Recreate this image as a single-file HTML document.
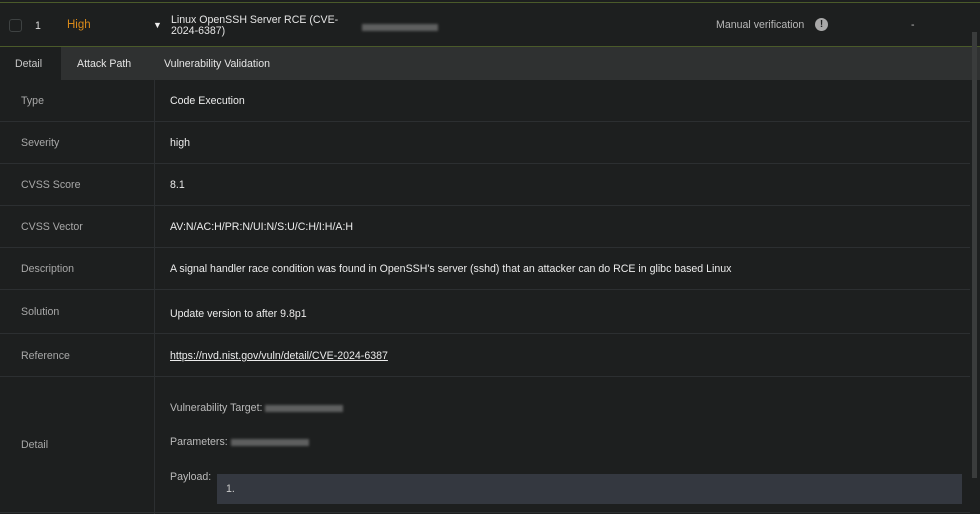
<!DOCTYPE html>
<html><head><meta charset="utf-8"><style>
*{margin:0;padding:0;box-sizing:border-box}
body{width:980px;height:514px;background:#1d1f1f;font-family:"Liberation Sans",sans-serif;font-size:10.6px;color:#e6e6e6;position:relative;overflow:hidden}
.a{position:absolute;white-space:nowrap}
.l{color:#a8a8a8;left:21px}
.v{left:170px;color:#ececec}
.hl{position:absolute;left:0;width:970px;height:1px;background:#2c2f31}
.blur{display:inline-block;height:7px;background:#8a8a8a;filter:blur(1.2px);opacity:.6;vertical-align:middle}
</style></head><body>
<div class="a" style="left:0;top:2px;width:980px;height:1px;background:#4a5a2a"></div>
<div class="a" style="left:9px;top:19px;width:13px;height:13px;border:1px solid #3e4242;border-radius:3px"></div>
<div class="a" style="left:35px;top:20px;color:#ddd">1</div>
<div class="a" style="left:67px;top:19px;color:#d98a1a;font-size:11.5px">High</div>
<div class="a" style="left:153px;top:20px;font-size:9px;color:#eee">▼</div>
<div class="a" style="left:171px;top:15px;line-height:11px;color:#e6e6e6">Linux OpenSSH Server RCE (CVE-<br>2024-6387)</div>
<div class="a" style="left:362px;top:21px"><span class="blur" style="width:76px"></span></div>
<div class="a" style="left:716px;top:19px;color:#b8b8b8">Manual verification</div>
<div class="a" style="left:815px;top:18px;width:13px;height:13px;border-radius:50%;background:#a8a8a8;color:#1d1f1f;font-size:10px;font-weight:bold;text-align:center;line-height:13px">!</div>
<div class="a" style="left:911px;top:19px;color:#bbb">-</div>
<div class="a" style="left:0;top:46px;width:980px;height:1px;background:#4a5a2a"></div>
<div class="a" style="left:0;top:47px;width:980px;height:33px;background:#2f3131"></div>
<div class="a" style="left:0;top:47px;width:61px;height:33px;background:#1d1f1f"></div>
<div class="a" style="left:15px;top:58px;color:#c8c8c8">Detail</div>
<div class="a" style="left:77px;top:58px;color:#e6e6e6">Attack Path</div>
<div class="a" style="left:164px;top:58px;color:#e6e6e6">Vulnerability Validation</div>
<div class="a" style="left:154px;top:80px;width:1px;height:434px;background:#2c2f31"></div>
<div class="hl" style="top:121px"></div><div class="hl" style="top:163px"></div><div class="hl" style="top:205px"></div><div class="hl" style="top:247px"></div><div class="hl" style="top:289px"></div><div class="hl" style="top:333px"></div><div class="hl" style="top:376px"></div><div class="hl" style="top:512px"></div>
<div class="a l" style="top:95px">Type</div><div class="a v" style="top:95px">Code Execution</div>
<div class="a l" style="top:137px">Severity</div><div class="a v" style="top:137px">high</div>
<div class="a l" style="top:179px">CVSS Score</div><div class="a v" style="top:179px">8.1</div>
<div class="a l" style="top:221px">CVSS Vector</div><div class="a v" style="top:221px">AV:N/AC:H/PR:N/UI:N/S:U/C:H/I:H/A:H</div>
<div class="a l" style="top:263px">Description</div><div class="a v" style="top:263px">A signal handler race condition was found in OpenSSH's server (sshd) that an attacker can do RCE in glibc based Linux</div>
<div class="a l" style="top:306px">Solution</div><div class="a v" style="top:308px">Update version to after 9.8p1</div>
<div class="a l" style="top:350px">Reference</div><div class="a v" style="top:350px;text-decoration:underline">https://nvd.nist.gov/vuln/detail/CVE-2024-6387</div>
<div class="a l" style="top:439px">Detail</div>
<div class="a v" style="top:402px;color:#bbb">Vulnerability Target: <span class="blur" style="width:78px"></span></div>
<div class="a v" style="top:436px;color:#bbb">Parameters: <span class="blur" style="width:78px"></span></div>
<div class="a v" style="top:471px;color:#bbb">Payload:</div>
<div class="a" style="left:217px;top:474px;width:745px;height:30px;background:#343840;color:#ccc;padding:9px 0 0 9px">1.</div>
<div class="a" style="left:972px;top:32px;width:5px;height:446px;background:#3a3c3c"></div>
</body></html>
